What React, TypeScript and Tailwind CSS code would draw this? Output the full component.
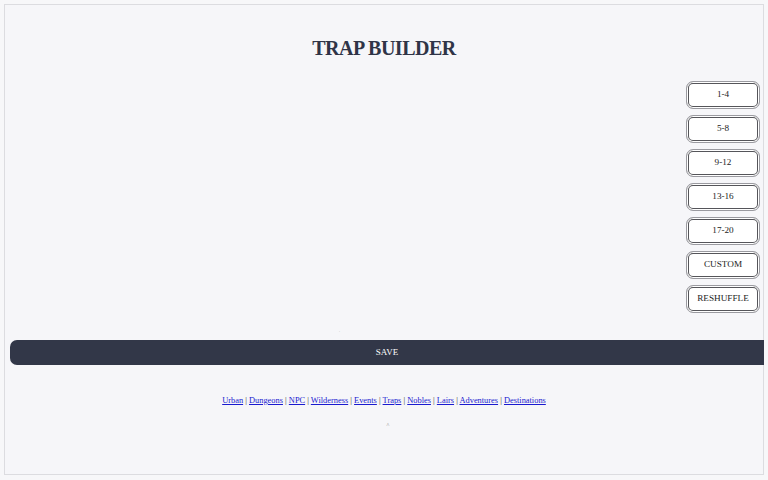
const ranges = ["1-4", "5-8", "9-12", "13-16", "17-20", "CUSTOM", "RESHUFFLE"];

const links = [
  "Urban",
  "Dungeons",
  "NPC",
  "Wilderness",
  "Events",
  "Traps",
  "Nobles",
  "Lairs",
  "Adventures",
  "Destinations",
];

export default function App() {
  return (
    <div className="h-[480px] w-[768px] bg-[#f7f7f9] p-[4px] font-['Liberation_Serif',serif] text-[#2b3040]">
      <div className="flex h-[471px] flex-col border border-[#dcdce0] bg-[#f6f6f9]">
        <h1 className="mt-[31px] text-center text-[20px] font-bold leading-[24px] tracking-tight text-[#2f3447]">
          TRAP BUILDER
        </h1>

        <div className="mt-[21px] flex justify-end pr-[3px]">
          <div className="flex flex-col gap-[6px]">
            {ranges.map((r) => (
              <button
                key={r}
                type="button"
                className="h-[28px] w-[74px] rounded-[7px] border border-[#9a9aa0] bg-white text-[9.2px] text-[#222] shadow-[inset_0_0_0_1px_#fff,inset_0_0_0_2px_#55555a]"
              >
                {r}
              </button>
            ))}
          </div>
        </div>

        <div className="mt-[16px] pl-[334px] text-[4px] leading-[4px] text-[#999]">.</div>

        <div className="ml-[5px] mt-[7px] flex h-[25px] w-[754px] items-center justify-center rounded-l-[7px] bg-[#323748] text-[9px] font-normal text-white">
          SAVE
        </div>

        <div className="mt-[30px] text-center text-[8.4px] leading-[12px] text-[#333]">
          {links.map((l, i) => (
            <span key={l}>
              {i > 0 && " | "}
              <a href="#" className="text-[#1a1ad0] underline">
                {l}
              </a>
            </span>
          ))}
        </div>

        <div className="mt-[15px] pl-[8px] text-center text-[6px] leading-[6px] text-[#888]">^</div>
      </div>
    </div>
  );
}
